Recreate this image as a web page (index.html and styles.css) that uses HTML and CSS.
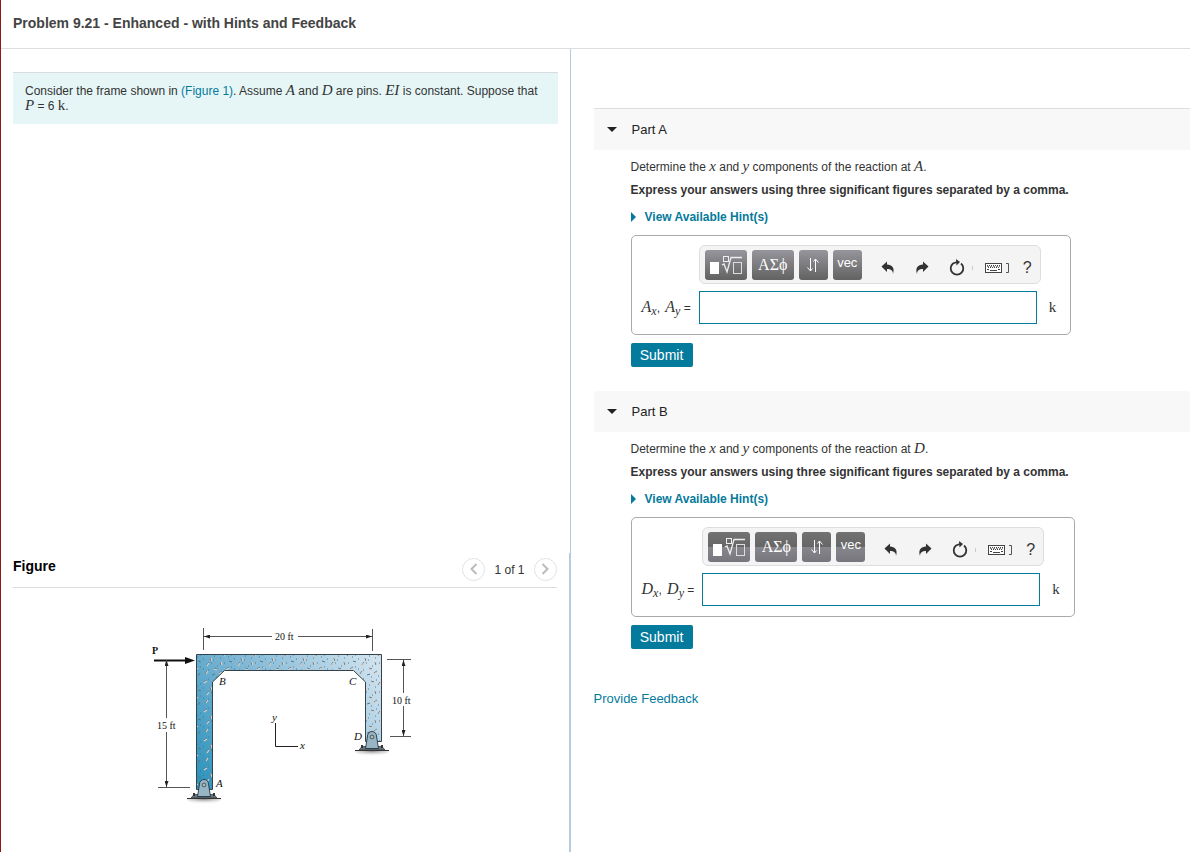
FILE: index.html
```html
<!DOCTYPE html>
<html lang="en">
<head>
    <meta charset="UTF-8">
    <meta name="viewport" content="width=device-width, initial-scale=1.0">
    <title>Problem 9.21</title>
    <link rel="stylesheet" href="styles.css">
</head>
<body>

<!-- Shared icons -->
<svg class="sprite" aria-hidden="true">
    <symbol id="icon-root" viewBox="0 0 32 20">
        <rect x="0" y="7" width="9" height="12" fill="#fff"/>
        <path d="M12 10 L14 9 L17 17 L21 2.500 H32" fill="none" stroke="#eee" stroke-width="1.300"/>
        <rect x="13.500" y="1.500" width="5" height="5" fill="none" stroke="#eee"/>
        <rect x="23.500" y="7.500" width="8" height="11" fill="none" stroke="#ddd"/>
    </symbol>
    <symbol id="icon-updown" viewBox="0 0 12 14">
        <path d="M3.500 0 V13 M0.500 9.500 L3.500 13 L5.500 10.500 M8.500 14 V1 M6.500 3.500 L8.500 1 L11.500 4.500" fill="none" stroke="#fff"/>
    </symbol>
    <symbol id="icon-undo" viewBox="0 0 14 14">
        <path d="M0.500 5.500 L6 0.500 V3.500 C11 3.500 14 7 12 13 C12 9.500 10 8 6 8 V11 Z" fill="#333"/>
    </symbol>
    <symbol id="icon-redo" viewBox="0 0 14 14">
        <path d="M13.500 5.500 L8 0.500 V3.500 C3 3.500 0 7 2 13 C2 9.500 4 8 8 8 V11 Z" fill="#333"/>
    </symbol>
    <symbol id="icon-reset" viewBox="0 0 16 18">
        <path d="M12 4.500 A6.300 6.300 0 1 1 4 4.500 L8 3" fill="none" stroke="#333" stroke-width="1.800"/>
        <path d="M7 0 L11 3 L7.500 6.500 Z" fill="#333"/>
    </symbol>
    <symbol id="icon-keyboard" viewBox="0 0 24 12">
        <rect x="0.500" y="1.500" width="16" height="9" fill="#fff" stroke="#444"/>
        <path d="M2 3.500 H15 M3 5.500 H15" stroke="#444" stroke-dasharray="1 1"/>
        <path d="M2 4.500 H15" stroke="#888" stroke-dasharray="2 1"/>
        <path d="M2 7.500 H4 M5 8.500 H12 M13 7.500 H15" stroke="#444"/>
        <path d="M21 1.500 H23.500 V10.500 H21" fill="none" stroke="#555"/>
    </symbol>
</svg>

<header class="page-header">
    <h1>Problem 9.21 - Enhanced - with Hints and Feedback</h1>
</header>

<main class="columns">
    <div class="left">
        <section class="problem">
            <p class="statement">Consider the frame shown in <a href="#figure">(Figure 1)</a>. Assume <i>A</i> and <i>D</i> are pins. <i>EI</i> is constant. Suppose that <i>P</i> = 6 <span class="unit">k</span>.</p>
        </section>

        <section class="figure" id="figure">
            <div class="figure-head">
                <h2>Figure</h2>
                <div class="pager">
                    <button type="button" class="round" aria-label="Previous figure">
                        <svg width="8" height="12" viewBox="0 0 8 12"><path d="M6.500 1 L1.500 6 L6.500 11" fill="none" stroke="#bbb" stroke-width="2"/></svg>
                    </button>
                    <span>1 of 1</span>
                    <button type="button" class="round" aria-label="Next figure">
                        <svg width="8" height="12" viewBox="0 0 8 12"><path d="M1.500 1 L6.500 6 L1.500 11" fill="none" stroke="#bbb" stroke-width="2"/></svg>
                    </button>
                </div>
            </div>

            <svg class="frame" width="290" height="190" viewBox="0 0 290 190" role="img" aria-label="Pinned frame A B C D with load P">
                <defs>
                    <linearGradient id="steel" gradientUnits="userSpaceOnUse" x1="60" y1="170" x2="240" y2="50">
                        <stop offset="0" stop-color="#2b93bc"/>
                        <stop offset="0.450" stop-color="#7bb5d4"/>
                        <stop offset="1" stop-color="#cfe2ee"/>
                    </linearGradient>
                    <pattern id="speckle" width="31" height="29" patternUnits="userSpaceOnUse">
                        <path d="M2 4 l3 -2 M8 9 l1 3 M14 3 l3 1 M21 7 l2 -3 M27 12 l3 1 M5 16 l2 -3 M12 19 l3 1 M18 13 l1 3 M24 20 l3 -2 M3 25 l2 -3 M10 26 l3 -1 M17 24 l3 -2 M27 27 l2 -3" stroke="#5c7482" stroke-width="1"/>
                        <path d="M2 5 l3 -2 M9 9 l1 3 M14 4 l3 1 M22 7 l2 -3 M5 17 l2 -3 M12 20 l3 1 M19 13 l1 3 M24 21 l3 -2 M4 25 l2 -3 M17 25 l3 -2" stroke="#dccfc5" stroke-width="1.200"/>
                        <path d="M6 1h1 M12 7h1 M18 9h1 M25 3h1 M1 10h1 M22 14h1 M9 14h1 M15 17h1 M29 18h1 M6 21h1 M14 28h1 M21 27h1 M1 20h1 M25 25h1 M29 6h1 M11 11h1 M26 8h1 M19 2h1" stroke="#3f748f" stroke-width="0.900"/>
                    </pattern>
                    <radialGradient id="shade" cx="0.500" cy="0" r="0.900">
                        <stop offset="0" stop-color="#888"/>
                        <stop offset="1" stop-color="#fff" stop-opacity="0"/>
                    </radialGradient>
                    <g id="pin">
                        <path d="M-17 19 H17 C14 27 -14 27 -17 19 Z" fill="url(#shade)"/>
                        <path d="M-13 18 L-10 14.500 H10 L13 18 Z" fill="#657680" stroke="#333" stroke-width="0.700"/>
                        <path d="M-10 13 v3 M10 13 v3" stroke="#333" stroke-width="2"/>
                        <path d="M-6.500 16.500 L-4.500 4 A4.500 4.500 0 0 1 4.500 4 L6.500 16.500 Z" fill="#98b5c5" stroke="#273640" stroke-width="0.900"/>
                        <circle cx="0" cy="5" r="1.900" fill="#aebdc5" stroke="#344" stroke-width="0.800"/>
                        <path d="M-17 18.500 H17" stroke="#333"/>
                    </g>
                    <marker id="tip" viewBox="0 0 6 4" refX="6" refY="2" markerWidth="6" markerHeight="4" markerUnits="userSpaceOnUse" orient="auto">
                        <path d="M0 0 L6 2 L0 4 Z" fill="#222"/>
                    </marker>
                </defs>

                <!-- Frame body -->
                <path d="M56.500 34.500 H241.500 V121.500 H225.500 V62 L213.500 50.500 H84.500 L72.500 62 V169.500 H56.500 Z" fill="url(#steel)"/>
                <path d="M56.500 34.500 H241.500 V121.500 H225.500 V62 L213.500 50.500 H84.500 L72.500 62 V169.500 H56.500 Z" fill="url(#speckle)" stroke="#34434b"/>
                <use href="#pin" x="64" y="160"/>
                <use href="#pin" x="232" y="112"/>

                <!-- Load -->
                <path d="M14 40.500 H47" stroke="#111" stroke-width="1.800"/>
                <path d="M45 37 L55 40.500 L45 44 Z" fill="#111"/>

                <!-- Dimensions -->
                <g stroke="#555" fill="none">
                    <path d="M63.500 8 V30 M232.500 9 V31 M18 167.500 H50 M247 39.500 H271 M250 116.500 H271"/>
                    <path d="M132 16.500 H64" marker-end="url(#tip)"/>
                    <path d="M158 16.500 H232" marker-end="url(#tip)"/>
                    <path d="M26.500 98 V40" marker-end="url(#tip)"/>
                    <path d="M26.500 112 V167" marker-end="url(#tip)"/>
                    <path d="M263.500 73 V40" marker-end="url(#tip)"/>
                    <path d="M263.500 86 V116" marker-end="url(#tip)"/>
                    <path d="M135.500 103 V126.500 H158" stroke="#222"/>
                </g>
                <g class="frame-text">
                    <text x="12" y="34" font-weight="bold">P</text>
                    <text x="135" y="20">20 ft</text>
                    <text x="17" y="109">15 ft</text>
                    <text x="252" y="84">10 ft</text>
                </g>
                <g class="frame-text frame-point">
                    <text x="79" y="65">B</text>
                    <text x="209" y="65">C</text>
                    <text x="76" y="167">A</text>
                    <text x="214" y="120">D</text>
                    <text x="132" y="101">y</text>
                    <text x="160" y="129">x</text>
                </g>
            </svg>
        </section>
    </div>

    <div class="right">
        <section class="part">
            <h2 class="part-head"><button type="button" class="toggle">Part A</button></h2>
            <div class="part-body">
                <p>Determine the <i>x</i> and <i>y</i> components of the reaction at <i>A</i>.</p>
                <p class="express">Express your answers using three significant figures separated by a comma.</p>
                <a class="hints" href="#">View Available Hint(s)</a>
                <form>
                    <div class="answer">
                        <div class="toolbar">
                            <button type="button" class="key wide" aria-label="Templates"><svg width="32" height="20"><use href="#icon-root"/></svg></button>
                            <button type="button" class="key wide greek">ΑΣϕ</button>
                            <button type="button" class="key" aria-label="Subscript and superscript"><svg width="12" height="14"><use href="#icon-updown"/></svg></button>
                            <button type="button" class="key vec">vec</button>
                            <div class="tools">
                                <button type="button" class="tool" aria-label="Undo"><svg width="14" height="14"><use href="#icon-undo"/></svg></button>
                                <button type="button" class="tool" aria-label="Redo"><svg width="14" height="14"><use href="#icon-redo"/></svg></button>
                                <button type="button" class="tool reset" aria-label="Reset"><svg width="16" height="18"><use href="#icon-reset"/></svg></button>
                                <span class="divider"></span>
                                <button type="button" class="tool keyboard" aria-label="Keyboard shortcuts"><svg width="24" height="12"><use href="#icon-keyboard"/></svg></button>
                                <button type="button" class="tool help">?</button>
                            </div>
                        </div>
                        <label for="answerA"><i>A<sub>x</sub></i>, <i>A<sub>y</sub></i> =</label>
                        <input type="text" id="answerA" autocomplete="off">
                        <span class="unit">k</span>
                    </div>
                    <button type="submit" class="submit">Submit</button>
                </form>
            </div>
        </section>

        <section class="part part-b">
            <h2 class="part-head"><button type="button" class="toggle">Part B</button></h2>
            <div class="part-body">
                <p>Determine the <i>x</i> and <i>y</i> components of the reaction at <i>D</i>.</p>
                <p class="express">Express your answers using three significant figures separated by a comma.</p>
                <a class="hints" href="#">View Available Hint(s)</a>
                <form>
                    <div class="answer">
                        <div class="toolbar">
                            <button type="button" class="key wide" aria-label="Templates"><svg width="32" height="20"><use href="#icon-root"/></svg></button>
                            <button type="button" class="key wide greek">ΑΣϕ</button>
                            <button type="button" class="key" aria-label="Subscript and superscript"><svg width="12" height="14"><use href="#icon-updown"/></svg></button>
                            <button type="button" class="key vec">vec</button>
                            <div class="tools">
                                <button type="button" class="tool" aria-label="Undo"><svg width="14" height="14"><use href="#icon-undo"/></svg></button>
                                <button type="button" class="tool" aria-label="Redo"><svg width="14" height="14"><use href="#icon-redo"/></svg></button>
                                <button type="button" class="tool reset" aria-label="Reset"><svg width="16" height="18"><use href="#icon-reset"/></svg></button>
                                <span class="divider"></span>
                                <button type="button" class="tool keyboard" aria-label="Keyboard shortcuts"><svg width="24" height="12"><use href="#icon-keyboard"/></svg></button>
                                <button type="button" class="tool help">?</button>
                            </div>
                        </div>
                        <label for="answerD"><i>D<sub>x</sub></i>, <i>D<sub>y</sub></i> =</label>
                        <input type="text" id="answerD" autocomplete="off">
                        <span class="unit">k</span>
                    </div>
                    <button type="submit" class="submit">Submit</button>
                </form>
            </div>
        </section>

        <a class="feedback" href="#">Provide Feedback</a>
    </div>
</main>

</body>
</html>
```
FILE: styles.css
```css
/* Reset */
* {
    margin: 0;
    padding: 0;
    box-sizing: border-box;
}

body {
    display: flex;
    flex-direction: column;
    min-height: 100vh;
    border-left: 1px solid #8b1a1a;
    font-family: "Liberation Sans", Arial, sans-serif;
    font-size: 12px;
    line-height: 14px;
    color: #333;
    background: #fff;
}

a {
    color: #047a9c;
    text-decoration: none;
}

a:hover {
    text-decoration: underline;
}

button,
input {
    font-family: inherit;
}

button {
    cursor: pointer;
}

i,
.unit {
    font-family: "Liberation Serif", "Times New Roman", serif;
    font-size: 15px;
    line-height: 1px;
}

.sprite {
    display: none;
}

/* Header */
.page-header {
    padding: 15px 12px 16px;
    border-bottom: 1px solid #ddd;
}

.page-header h1 {
    font-size: 14px;
    line-height: 17px;
    color: #444;
}

/* Columns */
.columns {
    flex: 1;
    display: grid;
    grid-template-columns: 479fr 521fr;
}

.left {
    display: flex;
    flex-direction: column;
}

.problem {
    flex: 1;
    padding: 23px 12px;
    border-right: 1px solid #b8cbdd;
}

.statement {
    padding: 11px 12px 10px;
    border-top: 1px solid #d8dcdc;
    background: #e6f6f7;
    line-height: 15px;
}

/* Figure */
.figure {
    padding: 4px 12px 42px;
    border-right: 2px solid #b8cbdd;
}

.figure-head {
    display: flex;
    justify-content: space-between;
    align-items: flex-start;
    padding-bottom: 6px;
    border-bottom: 1px solid #ddd;
}

.figure-head h2 {
    font-size: 14px;
    line-height: 18px;
    color: #000;
}

.pager {
    display: flex;
    align-items: center;
    gap: 9px;
    height: 24px;
}

.pager span {
    padding-top: 2px;
}

.round {
    display: flex;
    align-items: center;
    justify-content: center;
    width: 23px;
    height: 23px;
    border: 1px solid #e2e2e2;
    border-radius: 50%;
    background: #fff;
}

.frame {
    display: block;
    margin: 32px auto 0 127px;
}

.frame-text {
    font-family: "Liberation Serif", "Times New Roman", serif;
    font-size: 10px;
    fill: #111;
}

.frame-point {
    font-size: 11px;
    font-style: italic;
}

/* Parts */
.right {
    padding: 59px 0 0 23px;
}

.part-head {
    padding: 12px 17px 12px 13px;
    border-top: 1px solid #ddd;
    background: #f8f8f8;
}

.part-b .part-head {
    border-top: none;
}

.toggle {
    display: flex;
    align-items: center;
    gap: 15px;
    border: none;
    background: none;
    font-size: 13px;
    line-height: 17px;
    color: #222;
}

.toggle::before {
    content: "";
    border: 5px solid transparent;
    border-top-color: #222;
    border-bottom: none;
}

.part-body {
    padding: 10px 0 24px 37px;
}

.part-body .express {
    margin: 9px 0 13px;
    font-weight: bold;
}

.hints {
    display: flex;
    align-items: center;
    gap: 9px;
    font-weight: bold;
}

.hints::before {
    content: "";
    border: 5px solid transparent;
    border-left-color: #047a9c;
    border-right: none;
}

/* Answer box */
.answer {
    display: grid;
    grid-template-columns: auto auto auto;
    justify-content: start;
    align-items: center;
    gap: 7px 8px;
    width: fit-content;
    margin: 11px 0 8px;
    padding: 9px 14px 10px 10px;
    border: 1px solid #aaa;
    border-radius: 5px;
}

.answer label i {
    font-size: 16px;
}

.answer label i + i {
    margin-left: 2px;
}

.answer label sub {
    font-size: 12px;
    line-height: 1px;
    vertical-align: -3px;
}

.answer .unit {
    padding-left: 4px;
}

.answer input {
    width: 338px;
    height: 33px;
    padding: 0 8px;
    border: 1px solid #047a9c;
    font-size: 14px;
}

.toolbar {
    grid-column: 2 / 4;
    justify-self: start;
    display: flex;
    align-items: center;
    gap: 5px;
    width: 342px;
    height: 39px;
    padding: 0 5px;
    border: 1px solid #ddd;
    border-radius: 6px;
    background: #f4f4f4;
}

.key {
    display: flex;
    align-items: center;
    justify-content: center;
    width: 29px;
    height: 30px;
    border: none;
    border-radius: 3px;
    background: linear-gradient(#96959c, #626262);
    color: #fff;
}

.part-b .key {
    background: linear-gradient(#727272, #666 50%, #87868d 50%, #77767d);
}

.wide {
    width: 42px;
}

.greek {
    font-family: "Liberation Serif", "Times New Roman", serif;
    font-size: 16px;
}

.vec {
    padding-bottom: 4px;
    font-size: 13px;
}

.tools {
    display: flex;
    align-items: center;
    padding: 6px 0 0 14px;
}

.tool {
    display: flex;
    margin-right: 20px;
    border: none;
    background: none;
    color: #333;
}

.reset {
    margin-right: 7px;
}

.divider {
    width: 1px;
    height: 4px;
    background: #ccc;
}

.keyboard {
    margin: 0 14px 0 12px;
}

.help {
    margin: 0;
    font-size: 16px;
}

.submit {
    width: 62px;
    height: 24px;
    border: none;
    border-radius: 2px;
    background: #047a9c;
    color: #fff;
    font-size: 14px;
}

.feedback {
    display: inline-block;
    margin-top: 19px;
    font-size: 13px;
}
```
